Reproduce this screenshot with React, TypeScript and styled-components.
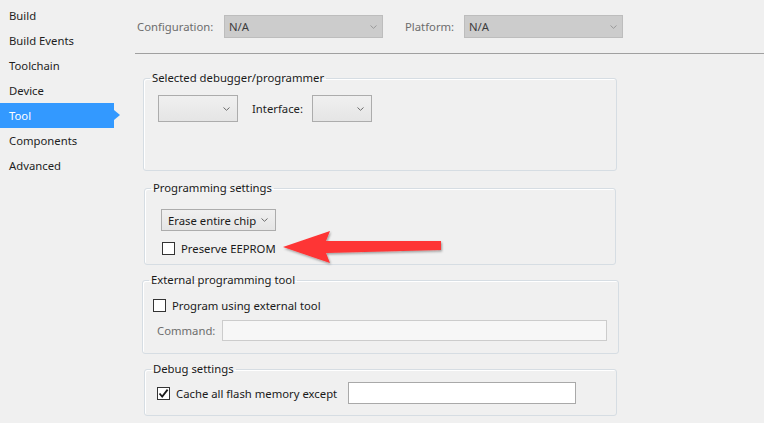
import React from 'react'
import styled, { createGlobalStyle } from 'styled-components'

const Global = createGlobalStyle`
	html, body {
		margin: 0;
		padding: 0;
		background: #f0f0f0;
	}
	body {
		font-family: 'Noto Sans', 'Open Sans', sans-serif;
		font-size: 11.3px;
		color: #1e1e1e;
	}
`

const navItems = ['Build', 'Build Events', 'Toolchain', 'Device', 'Tool', 'Components', 'Advanced']

const Chevron: React.FC<{ color?: string }> = ({ color = '#6b6b6b' }) => (
	<svg width='7' height='4' viewBox='0 0 7 4'>
		<polyline points='0.5,0.5 3.5,3.3 6.5,0.5' fill='none' stroke={color} strokeWidth='1' />
	</svg>
)

const CheckBox: React.FC<{ checked?: boolean }> = ({ checked }) => (
	<Box>
		{checked && (
			<svg width='11' height='11' viewBox='0 0 11 11'>
				<path d='M1.5 5.5 L4.2 8.6 L9.6 1.6' fill='none' stroke='#1a1a1a' strokeWidth='1.8' />
			</svg>
		)}
	</Box>
)

const App: React.FC = () => {
	return (
		<Page>
			<Global />
			<Sidebar>
				{navItems.map((item) => (
					<NavItem key={item} $active={item === 'Tool'}>
						{item}
					</NavItem>
				))}
			</Sidebar>
			<Main>
				<TopBar>
					<DimLabel $width={87}>Configuration:</DimLabel>
					<TopSelect>
						<span>N/A</span>
						<Chevron color='#9a9a9a' />
					</TopSelect>
					<DimLabel $width={59} $gap={22}>
						Platform:
					</DimLabel>
					<TopSelect>
						<span>N/A</span>
						<Chevron color='#9a9a9a' />
					</TopSelect>
				</TopBar>

				<Group $left={8} $width={474} $height={101} $top={16}>
					<Legend>Selected debugger/programmer</Legend>
					<Body $pad='9px 0 0 14px'>
						<Row>
							<Select $width={80} $height={27}>
								<span />
								<Chevron />
							</Select>
							<Label $width={60} $gap={14}>
								Interface:
							</Label>
							<Select $width={60} $height={27}>
								<span />
								<Chevron />
							</Select>
						</Row>
					</Body>
				</Group>

				<Group $left={9} $width={472} $height={85} $top={9}>
					<Legend>Programming settings</Legend>
					<Body $pad='13px 0 0 16px'>
						<Select $width={115} $height={22}>
							<span>Erase entire chip</span>
							<Chevron />
						</Select>
						<CheckRow $top={9} $shift={1}>
							<CheckBox />
							<span>Preserve EEPROM</span>
						</CheckRow>
					</Body>
				</Group>

				<Group $left={7} $width={477} $height={82} $top={7}>
					<Legend>External programming tool</Legend>
					<Body $pad='9px 0 0 10px'>
						<CheckRow>
							<CheckBox />
							<span>Program using external tool</span>
						</CheckRow>
						<Row $top={7}>
							<DimLabel $width={65} $gap={4}>
								Command:
							</DimLabel>
							<Input $width={385} $height={21} $dim />
						</Row>
					</Body>
				</Group>

				<Group $left={9} $width={473} $height={55} $top={7}>
					<Legend>Debug settings</Legend>
					<Body $pad='5px 0 0 12px'>
						<Row>
							<CheckRow>
								<CheckBox checked />
								<span>Cache all flash memory except</span>
							</CheckRow>
							<Input $width={228} $height={22} $gap={11} />
						</Row>
					</Body>
				</Group>
			</Main>

			<Annotation width='170' height='40' viewBox='0 0 170 40'>
				<defs>
					<filter id='shade' x='-10%' y='-20%' width='130%' height='160%'>
						<feDropShadow dx='1' dy='1.5' stdDeviation='1' floodColor='#000' floodOpacity='0.35' />
					</filter>
				</defs>
				<polygon
					points='3,19 50,3 46,13 161,13 161,22 46,25 50,35'
					fill='#fe3434'
					filter='url(#shade)'
				/>
			</Annotation>
		</Page>
	)
}

const Page = styled.div`
	position: relative;
	display: flex;
	width: 764px;
	height: 423px;
	overflow: hidden;
`

const Sidebar = styled.nav`
	width: 135px;
	flex-shrink: 0;
	padding-top: 3px;
	box-sizing: border-box;
`

const NavItem = styled.div<{ $active?: boolean }>`
	position: relative;
	width: 114px;
	height: 25px;
	line-height: 25px;
	padding-left: 9px;
	box-sizing: border-box;
	background: ${(p) => (p.$active ? '#3399ff' : 'transparent')};
	color: ${(p) => (p.$active ? '#ffffff' : '#1e1e1e')};

	&::after {
		content: '';
		display: ${(p) => (p.$active ? 'block' : 'none')};
		position: absolute;
		right: -6px;
		top: 7px;
		border-left: 6px solid #3399ff;
		border-top: 5.5px solid transparent;
		border-bottom: 5.5px solid transparent;
	}
`

const Main = styled.main`
	flex: 1;
	display: flex;
	flex-direction: column;
`

const TopBar = styled.div`
	display: flex;
	align-items: center;
	height: 54px;
	padding: 15px 0 15px 2px;
	box-sizing: border-box;
	border-bottom: 1px solid #a0a0a0;
`

const Label = styled.span<{ $width?: number; $gap?: number }>`
	display: inline-block;
	width: ${(p) => (p.$width ? `${p.$width}px` : 'auto')};
	margin-left: ${(p) => p.$gap ?? 0}px;
	flex-shrink: 0;
	white-space: nowrap;
`

const DimLabel = styled(Label)`
	color: #6d6d6d;
`

const TopSelect = styled.div`
	display: flex;
	align-items: center;
	justify-content: space-between;
	width: 159px;
	height: 23px;
	padding: 0 5px 0 4px;
	box-sizing: border-box;
	background: #cccccc;
	border: 1px solid #bdbdbd;
	color: #3c3c3c;
`

const Group = styled.fieldset<{ $left: number; $width: number; $height: number; $top: number }>`
	margin: ${(p) => p.$top}px 0 0 ${(p) => p.$left}px;
	width: ${(p) => p.$width}px;
	height: ${(p) => p.$height}px;
	min-width: 0;
	padding: 0;
	box-sizing: border-box;
	border: 1px solid #d6dde3;
	border-radius: 3px;
	box-shadow: inset 1px 1px 0 #ffffff;
`

const Legend = styled.legend`
	margin-left: 6px;
	padding: 0 2px;
	line-height: 16px;
	color: #1a1a1a;
`

const Body = styled.div<{ $pad: string }>`
	padding: ${(p) => p.$pad};
`

const Row = styled.div<{ $top?: number }>`
	display: flex;
	align-items: center;
	margin-top: ${(p) => p.$top ?? 0}px;
`

const Select = styled.div<{ $width: number; $height: number }>`
	display: flex;
	align-items: center;
	justify-content: space-between;
	width: ${(p) => p.$width}px;
	height: ${(p) => p.$height}px;
	padding: 0 7px 0 6px;
	box-sizing: border-box;
	background: linear-gradient(#f0f0f0, #e5e5e5);
	border: 1px solid #acacac;
	color: #1a1a1a;
`

const CheckRow = styled.label<{ $top?: number; $shift?: number }>`
	display: flex;
	align-items: center;
	gap: 6px;
	height: 16px;
	margin-top: ${(p) => p.$top ?? 0}px;
	margin-left: ${(p) => p.$shift ?? 0}px;
	color: #1a1a1a;
`

const Box = styled.span`
	display: flex;
	align-items: center;
	justify-content: center;
	width: 13px;
	height: 13px;
	box-sizing: border-box;
	background: #ffffff;
	border: 1px solid #333333;
`

const Input = styled.div<{ $width: number; $height: number; $gap?: number; $dim?: boolean }>`
	width: ${(p) => p.$width}px;
	height: ${(p) => p.$height}px;
	margin-left: ${(p) => p.$gap ?? 0}px;
	box-sizing: border-box;
	background: ${(p) => (p.$dim ? '#f7f7f7' : '#ffffff')};
	border: 1px solid ${(p) => (p.$dim ? '#cccccc' : '#a9a9a9')};
`

const Annotation = styled.svg`
	position: absolute;
	left: 280px;
	top: 228px;
	pointer-events: none;
`

export default App
